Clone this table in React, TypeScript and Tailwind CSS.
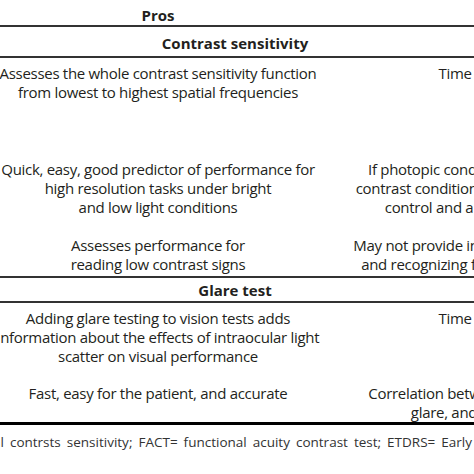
import React from 'react';

interface Row {
  pros: string[];
  cons: string[];
  height: string;
}

const contrastRows: Row[] = [
  {
    pros: ['Assesses the whole contrast sensitivity function', 'from lowest to highest spatial frequencies'],
    cons: ['Time consuming'],
    height: 'h-[96px]',
  },
  {
    pros: ['Quick, easy, good predictor of performance for', 'high resolution tasks under bright', 'and low light conditions'],
    cons: ['If photopic conditions are used, lower', 'contrast conditions may not be under full', 'control and are not reproducible'],
    height: 'h-[76px]',
  },
  {
    pros: ['Assesses performance for', 'reading low contrast signs'],
    cons: ['May not provide information for detecting', 'and recognizing faces and other objects'],
    height: 'h-[46px]',
  },
];

const glareRows: Row[] = [
  {
    pros: ['Adding glare testing to vision tests adds', 'information about the effects of intraocular light', 'scatter on visual performance'],
    cons: ['Time consuming'],
    height: 'h-[75px]',
  },
  {
    pros: ['Fast, easy for the patient, and accurate'],
    cons: ['Correlation between the visual acuity,', 'glare, and contrast is low'],
    height: 'h-[44px]',
  },
];

const TableRow = ({ row }: { row: Row }) => (
  <div className={`grid grid-cols-[344px_320px] pt-[6px] ${row.height}`}>
    <div className="text-center">
      {row.pros.map((line) => (
        <div key={line} className="whitespace-nowrap">{line}</div>
      ))}
    </div>
    <div className="text-center pl-[8px]">
      {row.cons.map((line) => (
        <div key={line} className="whitespace-nowrap">{line}</div>
      ))}
    </div>
  </div>
);

const SectionHeader = ({ title, className }: { title: string; className: string }) => (
  <div className={className}>
    <div className="w-[498px] text-center font-bold tracking-normal">{title}</div>
  </div>
);

export default function App() {
  return (
    <div className="w-[474px] h-[474px] overflow-hidden bg-white text-[#231f20] font-['Open_Sans',sans-serif] text-[15px] leading-[19px] tracking-[-0.3px]">
      <div className="w-[1000px] -ml-[14px]">
        {/* Column head */}
        <div className="grid grid-cols-[344px_320px] pt-[6px] h-[25px] font-bold tracking-normal">
          <div className="text-center">Pros</div>
          <div />
        </div>
        <div className="h-[2px] bg-[#333]" />

        <SectionHeader title="Contrast sensitivity" className="h-[29px] pt-[7px]" />
        <div className="h-[2px] bg-[#333]" />

        {contrastRows.map((row, i) => (
          <TableRow key={i} row={row} />
        ))}
        <div className="h-[2px] bg-[#333]" />

        <SectionHeader title="Glare test" className="h-[23px] pt-[3px]" />
        <div className="h-[2px] bg-[#333]" />

        {glareRows.map((row, i) => (
          <TableRow key={i} row={row} />
        ))}
        <div className="h-[3px] bg-black" />

        {/* Footnote */}
        <div className="pt-[8px] ml-[7px] whitespace-nowrap text-[13.5px] tracking-normal text-[#333] [word-spacing:2.5px]">
          al contrsts sensitivity; FACT= functional acuity contrast test; ETDRS= Early Treatment Diabetic Retinopathy Study
        </div>
      </div>
    </div>
  );
}
